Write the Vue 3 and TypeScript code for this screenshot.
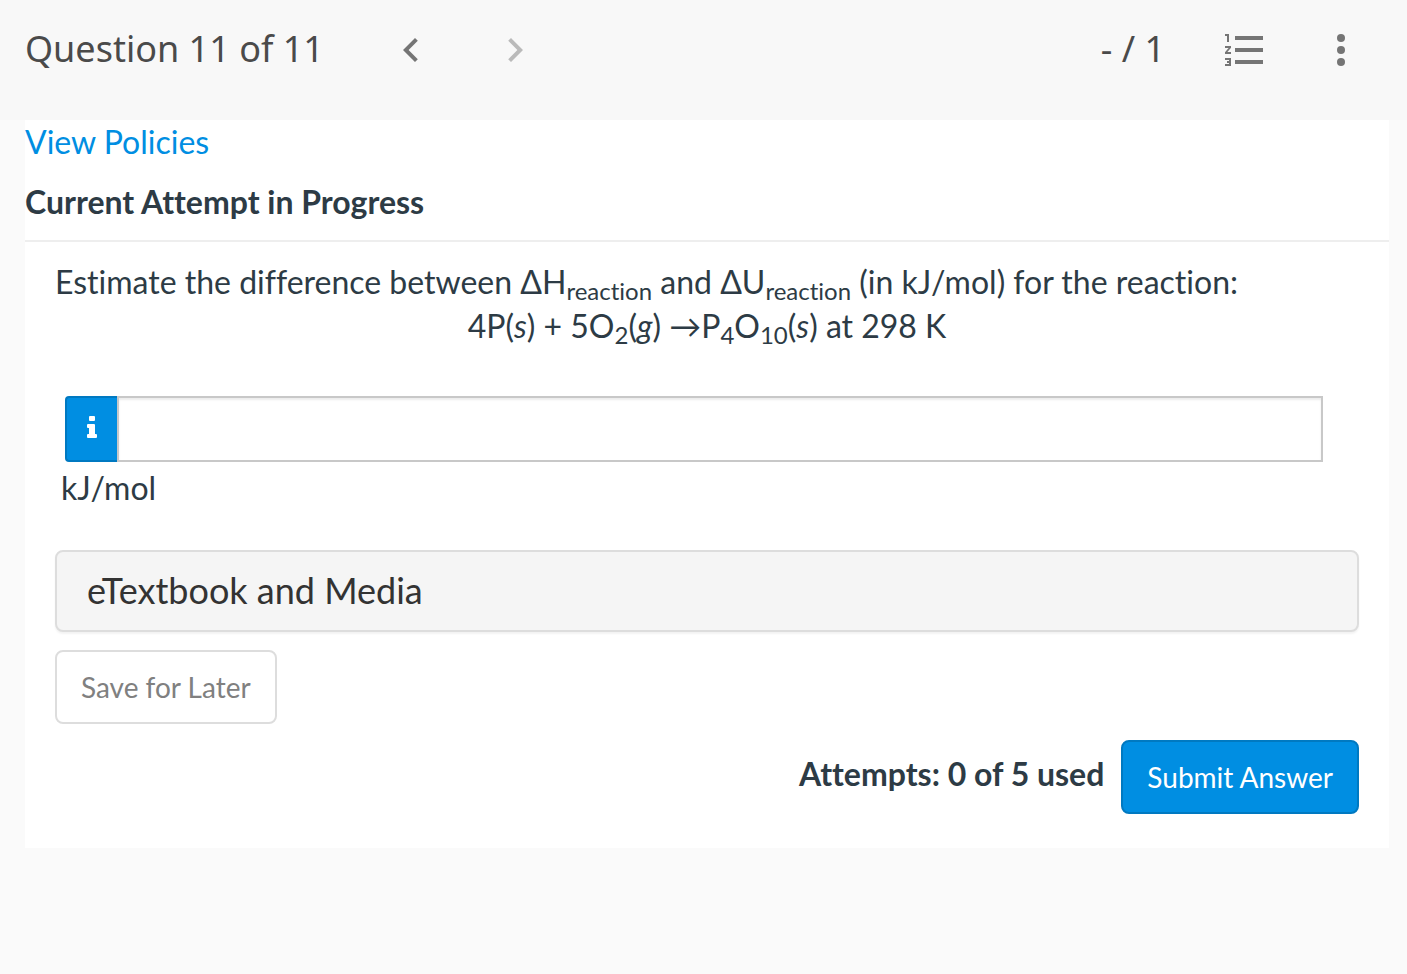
<script setup lang="ts">
import { ref } from 'vue'

const answer = ref('')
</script>

<template>
  <div class="page">
    <header class="bar">
      <h1 class="title">Question 11 of 11</h1>
      <button class="icon prev" type="button" aria-label="Previous question">
        <svg width="48" height="48" viewBox="0 0 48 48"><path d="M30.8 14.8 28 12 16 24l12 12 2.8-2.8-9.2-9.2z" fill="#757575" /></svg>
      </button>
      <button class="icon next" type="button" aria-label="Next question">
        <svg width="48" height="48" viewBox="0 0 48 48"><path d="M20 12l-2.8 2.8 9.2 9.2-9.2 9.2L20 36l12-12z" fill="#bababa" /></svg>
      </button>
      <span class="score">- / 1</span>
      <button class="icon list" type="button" aria-label="Question list">
        <svg width="48" height="48" viewBox="0 0 48 48" fill="#757575">
          <path d="M4 34h4v1H6v2h2v1H4v2h6v-8H4zM6 16h2V8H4v2h2zM4 22h3.600L4 26.200V28h6v-2H6.400L10 21.800V20H4zM14 10v4h28v-4zM14 38h28v-4H14zM14 26h28v-4H14z" />
        </svg>
      </button>
      <button class="icon more" type="button" aria-label="More options">
        <svg width="48" height="48" viewBox="0 0 48 48" fill="#757575"><circle cx="24" cy="12" r="4" /><circle cx="24" cy="24" r="4" /><circle cx="24" cy="36" r="4" /></svg>
      </button>
    </header>

    <main class="sheet">
      <a class="policies" href="#policies">View Policies</a>
      <h2 class="heading">Current Attempt in Progress</h2>
      <form class="question" @submit.prevent>
        <p class="prompt">Estimate the difference between ΔH<sub>reaction</sub> and ΔU<sub>reaction</sub> (in kJ/mol) for the reaction:</p>
        <p class="prompt equation">4P(<i>s</i>) + 5O<sub>2</sub>(<i>g</i>) →P<sub>4</sub>O<sub>10</sub>(<i>s</i>) at 298 K</p>
        <div class="entry">
          <button class="info" type="button" aria-label="Answer information">
            <svg width="10" height="22" viewBox="0 0 10 22" fill="#fff"><path d="M3 0h4q1 0 1 1v3q0 1-1 1H3q-1 0-1-1V1q0-1 1-1zM1 8h6q1 0 1 1v9h1q1 0 1 1v2q0 1-1 1H1q-1 0-1-1v-2q0-1 1-1h1v-6H1q-1 0-1-1V9q0-1 1-1z" /></svg>
          </button>
          <input id="answer" v-model="answer" class="field" type="text" autocomplete="off" />
        </div>
        <label class="unit" for="answer">kJ/mol</label>
        <button class="media" type="button">eTextbook and Media</button>
        <button class="save" type="button">Save for Later</button>
        <div class="submit-row">
          <span class="attempts">Attempts: 0 of 5 used</span>
          <button class="submit" type="submit">Submit Answer</button>
        </div>
      </form>
    </main>
  </div>
</template>

<style>
body {
  margin: 0;
  background: #fafafa;
}
</style>

<style scoped>
.page {
  box-sizing: border-box;
  min-height: 100vh;
  background: #fafafa;
  color: #2d3b45;
  font-family: Lato, sans-serif;
  font-size: 32px;
  font-variant-ligatures: none;
  line-height: 44px;
}
.page * {
  box-sizing: border-box;
}
button {
  font-family: inherit;
  font-variant-ligatures: none;
  cursor: pointer;
}
svg {
  display: block;
}
.bar {
  display: flex;
  align-items: center;
  height: 120px;
  padding: 0 42px 20px 25px;
  background: #f8f8f8;
  color: #4a4a4a;
  font-family: "Noto Sans", sans-serif;
}
.title,
.score {
  margin: 0;
  padding-bottom: 2px;
  font-size: 36px;
  font-weight: 400;
}
.icon {
  padding: 0;
  border: 0;
  background: none;
}
.prev {
  margin-left: 63px;
}
.next {
  margin-left: 56px;
}
.score {
  margin-left: auto;
}
.list {
  margin-left: 56px;
}
.more {
  margin-left: 48px;
}
.sheet {
  margin: 0 18px 0 25px;
  padding-bottom: 34px;
  background: #fff;
}
.policies {
  display: block;
  width: max-content;
  color: #008ee2;
  text-decoration: none;
}
.heading {
  margin: 0;
  padding: 16px 0;
  border-bottom: 2px solid #eee;
  font-size: 32px;
  font-weight: 700;
}
.question {
  padding: 18px 30px 0;
}
.prompt {
  margin: 0;
}
.equation {
  text-align: center;
}
sub {
  font-size: 24px;
  line-height: 0;
  vertical-align: -6px;
}
.entry {
  display: flex;
  height: 66px;
  margin: 48px 36px 0 10px;
}
.info {
  display: flex;
  align-items: center;
  justify-content: center;
  width: 52px;
  padding: 0 0 4px;
  border: 2px solid #0079c1;
  border-right: 0;
  border-radius: 4px 0 0 4px;
  background: #008ee2;
}
.field {
  flex: 1;
  min-width: 0;
  padding: 0 16px;
  border: 2px solid #c8c8c8;
  border-radius: 0;
  background: #fff;
  box-shadow: inset 0 2px 2px rgba(0, 0, 0, 0.08);
  color: inherit;
  font: inherit;
}
.unit {
  display: block;
  width: max-content;
  margin: 4px 0 0 6px;
}
.media {
  display: block;
  width: 100%;
  height: 82px;
  margin-top: 40px;
  padding: 0 30px 2px;
  border: 2px solid #ddd;
  border-radius: 8px;
  background: #f5f5f5;
  box-shadow: 0 2px 2px rgba(0, 0, 0, 0.05);
  color: #333;
  font-size: 36px;
  text-align: left;
}
.save,
.submit {
  height: 74px;
  padding: 0 24px;
  border: 2px solid #ddd;
  border-radius: 8px;
  background: #fff;
  color: #808080;
  font-size: 28px;
}
.save {
  display: block;
  margin-top: 18px;
}
.submit-row {
  display: flex;
  align-items: center;
  justify-content: flex-end;
  gap: 17px;
  margin-top: 16px;
}
.attempts {
  padding-bottom: 6px;
  font-weight: 700;
}
.submit {
  border-color: #0079c1;
  background: #008ee2;
  color: #fff;
}
</style>
